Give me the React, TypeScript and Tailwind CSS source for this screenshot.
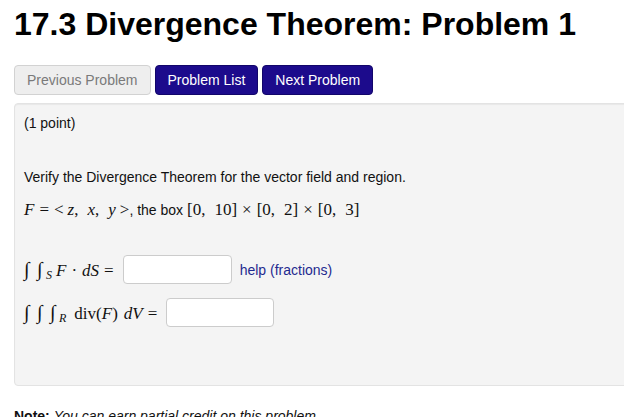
import React from "react";

const sans = { fontFamily: '"Liberation Sans", Arial, sans-serif' };

function Math({ children }: { children: React.ReactNode }) {
  return (
    <span className="inline-flex items-baseline text-[17px] [font-family:'Liberation_Serif',serif]">
      {children}
    </span>
  );
}

function I({ children }: { children: React.ReactNode }) {
  return <span className="italic">{children}</span>;
}

// relation / binary operator with MathJax-like spacing
function Op({ children }: { children: React.ReactNode }) {
  return <span className="mx-[5px]">{children}</span>;
}

function Int({ sub }: { sub?: string }) {
  if (!sub) {
    return (
      <span className="inline-block w-[13px] text-[20px] italic leading-none">∫</span>
    );
  }
  return (
    <span className="mr-[4px] inline-flex items-baseline">
      <span className="inline-block w-[9px] text-[20px] italic leading-none">∫</span>
      <sub className="text-[12px] italic">{sub}</sub>
    </span>
  );
}

function Answer({ w }: { w: string }) {
  return (
    <input
      type="text"
      className={`h-[29px] ${w} rounded-[4px] border border-[#cccccc] bg-white px-2 text-[14px] outline-none`}
    />
  );
}

export default function App() {
  return (
    <div
      className="h-[417px] w-[624px] overflow-hidden bg-white px-[14px] text-[#111]"
      style={sans}
    >
      <h1 className="pt-[7px] text-[32px] leading-[35px] font-bold text-black">
        17.3 Divergence Theorem: Problem 1
      </h1>

      <div className="mt-[23px] flex gap-[4px]">
        <button className="h-[30px] rounded-[4px] border border-[#d2d2d2] bg-[#eeeeee] px-[12px] text-[14px] text-[#7a7a7a]">
          Previous Problem
        </button>
        <button className="h-[30px] rounded-[4px] border border-[#12066a] bg-[#1c0b8c] px-[12px] text-[14px] text-white">
          Problem List
        </button>
        <button className="h-[30px] rounded-[4px] border border-[#12066a] bg-[#1c0b8c] px-[12px] text-[14px] text-white">
          Next Problem
        </button>
      </div>

      <div className="mt-[8px] h-[283px] w-[700px] rounded-[4px] border border-[#e3e3e3] bg-[#f4f4f4] px-[9px] pt-[9px] text-[14px] leading-[20px] shadow-[inset_0_1px_1px_rgba(0,0,0,0.05)]">
        <p>(1 point)</p>

        <p className="mt-[34px]">
          Verify the Divergence Theorem for the vector field and region.
        </p>

        <p className="mt-[13px] flex items-baseline">
          <Math>
            <I>F</I>
            <Op>=</Op>
            <span className="mr-[4px]">&lt;</span>
            <I>z</I>,<span className="w-[9px]" />
            <I>x</I>,<span className="w-[9px]" />
            <I>y</I>
            <span className="ml-[4px]">&gt;</span>
          </Math>
          <span>, the box&nbsp;</span>
          <Math>
            [0,<span className="w-[9px]" />10]
            <Op>×</Op>
            [0,<span className="w-[9px]" />2]
            <Op>×</Op>
            [0,<span className="w-[9px]" />3]
          </Math>
        </p>

        <div className="mt-[35px] flex items-center">
          <Math>
            <Int />
            <Int sub="S" />
            <I>F</I>
            <Op>·</Op>
            <I>dS</I>
            <Op>=</Op>
          </Math>
          <span className="ml-[4px]">
            <Answer w="w-[109px]" />
          </span>
          <a className="ml-[8px] text-[14px] text-[#1f2a8f]">help (fractions)</a>
        </div>

        <div className="mt-[14px] flex items-center">
          <Math>
            <Int />
            <Int />
            <Int sub="R" />
            <span className="ml-[4px]">div(</span>
            <I>F</I>
            <span className="mr-[6px]">)</span>
            <I>dV</I>
            <Op>=</Op>
          </Math>
          <span className="ml-[4px]">
            <Answer w="w-[108px]" />
          </span>
        </div>
      </div>

      <p className="mt-[20px] text-[14px] leading-[20px]">
        <b>Note:</b> <i>You can earn partial credit on this problem.</i>
      </p>
    </div>
  );
}
